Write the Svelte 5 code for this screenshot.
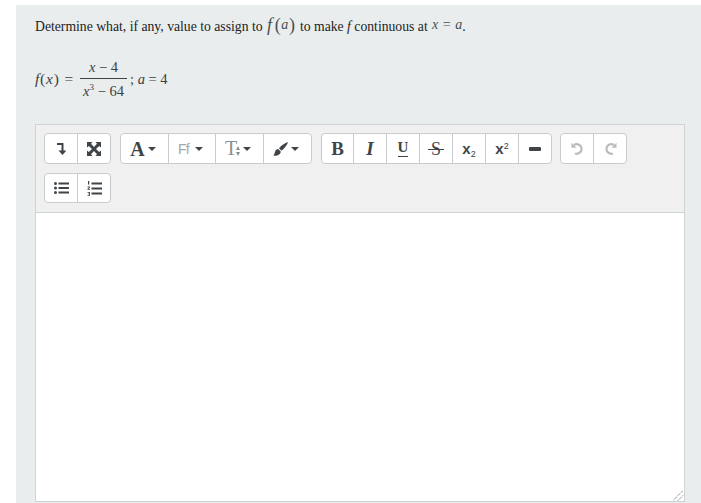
<script>
	const groups = [
		[{ id: 'indent', w: 33 }, { id: 'full', w: 32 }],
		[{ id: 'font', w: 48 }, { id: 'family', w: 47 }, { id: 'size', w: 48 }, { id: 'brush', w: 47 }],
		[
			{ id: 'bold', w: 32 },
			{ id: 'italic', w: 33 },
			{ id: 'underline', w: 33 },
			{ id: 'strike', w: 33 },
			{ id: 'sub', w: 33 },
			{ id: 'sup', w: 33 },
			{ id: 'rule', w: 32 }
		],
		[{ id: 'undo', w: 33 }, { id: 'redo', w: 32 }]
	];
	const lists = [{ id: 'bullets', w: 33 }, { id: 'numbers', w: 32 }];
	const withCaret = ['font', 'family', 'size', 'brush'];
</script>

{#snippet caret()}
	<svg class="caret" width="8" height="4" viewBox="0 0 8 4"><path d="M0 0h8L4 4z" fill="#3f4448" /></svg>
{/snippet}

{#snippet icon(id)}
	{#if id === 'indent'}
		<svg width="9" height="12" viewBox="0 0 9 12"><path d="M0 1h5.500v7" fill="none" stroke="#3f4448" stroke-width="2" /><path d="M1.500 7.500h8L5.500 12z" fill="#3f4448" /></svg>
	{:else if id === 'full'}
		<svg width="14" height="14" viewBox="0 0 14 14" fill="#3f4448">
			<path d="M0 0h5.500L4 1.800 7 5l3-3.200L8.500 0H14v5.500L12.200 4 9 7l3.200 3L14 8.500V14H8.500L10 12.200 7 9l-3 3.200L5.500 14H0V8.500L1.800 10 5 7 1.800 4 0 5.500z" />
		</svg>
	{:else if id === 'font'}
		<span class="serif big">A</span>{@render caret()}
	{:else if id === 'family'}
		<span class="ff">Ff</span>{@render caret()}
	{:else if id === 'size'}
		<span class="tsize">T</span>
		<svg class="updown" width="4" height="10" viewBox="0 0 4 10"><path d="M2 0l2 4H0zM2 10L0 6h4z" fill="#8b8f92" /></svg>
		{@render caret()}
	{:else if id === 'brush'}
		<svg width="15" height="14" viewBox="0 0 15 14" fill="#3f4448">
			<path d="M14.800.4c.6.600-3.200 6.200-6.300 8.300L6 6.300C8.400 3.300 14.200-.2 14.800.4z" />
			<path d="M5.200 7l2.500 2.500c.2 2.600-3 4.800-7.700 4.100 1.800-.9 1.300-2.500 2.300-4.500C2.900 7.700 4.200 7 5.200 7z" />
		</svg>
		{@render caret()}
	{:else if id === 'bold'}
		<span class="serif b">B</span>
	{:else if id === 'italic'}
		<span class="serif i">I</span>
	{:else if id === 'underline'}
		<span class="serif u">U</span>
	{:else if id === 'strike'}
		<span class="serif s">S</span>
	{:else if id === 'sub'}
		<span class="script">x<small class="low">2</small></span>
	{:else if id === 'sup'}
		<span class="script">x<small class="high">2</small></span>
	{:else if id === 'rule'}
		<span class="dash"></span>
	{:else if id === 'undo'}
		<svg width="13" height="13" viewBox="0 0 13 13" fill="none" stroke="#b9bcbe" stroke-width="2.200">
			<path d="M3 3A4.800 4.800 0 1 1 4 11.400" /><path d="M.5 .8v5h5z" fill="#b9bcbe" stroke="none" />
		</svg>
	{:else if id === 'redo'}
		<svg width="13" height="13" viewBox="0 0 13 13" fill="none" stroke="#b9bcbe" stroke-width="2.200">
			<path d="M10 3A4.800 4.800 0 1 0 9 11.400" /><path d="M12.500 .8v5h-5z" fill="#b9bcbe" stroke="none" />
		</svg>
	{:else if id === 'bullets'}
		<svg width="15" height="12" viewBox="0 0 15 12" fill="#3f4448">
			<circle cx="1.500" cy="1.500" r="1.500" /><circle cx="1.500" cy="6" r="1.500" /><circle cx="1.500" cy="10.500" r="1.500" />
			<path d="M4.500.5H15v2H4.500zM4.500 5H15v2H4.500zM4.500 9.500H15v2H4.500z" />
		</svg>
	{:else if id === 'numbers'}
		<svg width="15" height="15" viewBox="0 0 15 15" fill="#3f4448">
			<path d="M1 0h1.200v3.500H1zM.5 5.500h2.500v1L1.500 8H3v.8H.5v-1L2 6.300H.5zM.5 11h2.500v3.800H.5V14h1.600v-.7H1v-.6h1.100v-.9H.5z" />
			<path d="M4.500 1.500H15v2H4.500zM4.500 6.500H15v2H4.500zM4.500 11.500H15v2H4.500z" />
		</svg>
	{/if}
{/snippet}

<div class="panel">
	<p class="prompt">
		Determine what, if any, value to assign to
		<span class="math big-math"><i>f</i>&#8202;(<i class="small-a">a</i>)</span>
		to make <i>f</i> continuous at
		<span class="math small-math"><i>x</i> = <i>a</i></span>.
	</p>

	<div class="formula">
		<span class="lhs"><i>f</i>(<i>x</i>) =</span>
		<span class="fraction">
			<span class="top"><i>x</i> − 4</span>
			<span class="bottom"><i>x</i><sup>3</sup> − 64</span>
		</span>
		<span class="rest">; <i>a</i> = 4</span>
	</div>

	<div class="editor">
		<div class="toolbar">
			<div class="row">
				{#each groups as group}
					<div class="group">
						{#each group as btn}
							<button class:has-caret={withCaret.includes(btn.id)} style="width: {btn.w}px">{@render icon(btn.id)}</button>
						{/each}
					</div>
				{/each}
			</div>
			<div class="row second">
				<div class="group">
					{#each lists as btn}
						<button style="width: {btn.w}px">{@render icon(btn.id)}</button>
					{/each}
				</div>
			</div>
		</div>
		<div class="body">
			<svg class="grip" width="11" height="11" viewBox="0 0 11 11">
				<path d="M0 10.500L10 .5M5 10.500L10 5.500" stroke="#555" stroke-width="1" stroke-dasharray="1 1" fill="none" />
			</svg>
		</div>
	</div>
</div>

<style>
	:global(body) {
		background: #fff;
		overflow: hidden;
	}

	.panel {
		background: #e9edee;
		box-sizing: border-box;
		color: #222;
		font-family: "Liberation Serif", serif;
		font-size: 13.7px;
		height: 498px;
		margin: 5px 0 0 16px;
		padding: 0 16px 0 19px;
	}

	.prompt {
		line-height: 18px;
		margin: 0;
		padding-top: 11px;
		white-space: nowrap;
	}

	.math {
		color: #4a4f52;
	}

	.big-math {
		font-size: 18px;
		letter-spacing: 0.6px;
		margin: 0 1px;
	}

	.small-a {
		font-size: 14px;
		position: relative;
		top: -2px;
	}

	.small-math {
		font-size: 14px;
		margin-left: 1px;
		position: relative;
		top: -2px;
		word-spacing: 1px;
	}

	.formula {
		align-items: center;
		color: #3c4144;
		display: flex;
		font-size: 14.5px;
		height: 50px;
		margin-top: 18px;
	}

	.lhs {
		font-size: 15.5px;
		letter-spacing: 0.8px;
		white-space: nowrap;
		width: 45px;
	}

	.fraction {
		display: inline-flex;
		flex-direction: column;
		text-align: center;
		width: 47px;
	}

	.top {
		border-bottom: 1px solid #3c4144;
		line-height: 17px;
		padding-bottom: 2px;
	}

	.bottom {
		line-height: 17px;
		padding-top: 4px;
	}

	sup {
		font-size: 9px;
		line-height: 0;
	}

	.rest {
		margin-left: 3px;
		white-space: nowrap;
	}

	.editor {
		background: #fff;
		border: 1px solid #cfd3d6;
		box-sizing: border-box;
		display: flex;
		flex-direction: column;
		height: 378px;
		margin-top: 20px;
	}

	.toolbar {
		background: #f0f0f0;
		border-bottom: 1px solid #cfd3d6;
		box-sizing: border-box;
		display: flex;
		flex-direction: column;
		gap: 9px;
		height: 88px;
		padding: 8px 8px 0;
	}

	.row {
		display: flex;
		gap: 9px;
	}

	.group {
		background: #fff;
		border: 1px solid #c9cccf;
		border-radius: 4px;
		box-sizing: border-box;
		display: flex;
		height: 31px;
	}

	.row > .group:nth-child(4) {
		margin-left: -1px;
	}

	.second > .group {
		height: 30px;
	}

	button {
		align-items: center;
		background: none;
		border: none;
		border-right: 1px solid #c9cccf;
		box-sizing: border-box;
		color: #3f4448;
		display: flex;
		gap: 3px;
		justify-content: center;
		padding: 0;
	}

	button:last-child {
		border-right: none;
	}

	button.has-caret {
		padding-right: 3px;
	}

	.serif {
		font-family: "Liberation Serif", serif;
		line-height: 1;
	}

	.big {
		font-size: 20px;
		font-weight: bold;
	}

	.ff {
		color: #a4a7a9;
		font-family: "Liberation Sans", sans-serif;
		font-size: 14px;
		letter-spacing: -0.7px;
		margin-right: 3px;
	}

	.tsize {
		color: #8b8f92;
		font-family: "Liberation Serif", serif;
		font-size: 20px;
		margin-right: -4px;
	}

	.updown {
		margin-top: 5px;
	}

	.b {
		font-size: 19px;
		font-weight: bold;
	}

	.i {
		font-size: 19px;
		font-style: italic;
		font-weight: bold;
	}

	.u {
		border-bottom: 1px solid #3f4448;
		font-size: 15px;
		font-weight: bold;
		padding: 0 0 1px;
	}

	.s {
		font-size: 18px;
		position: relative;
	}

	.s::after {
		background: #3f4448;
		content: "";
		height: 1px;
		left: -3px;
		position: absolute;
		right: -3px;
		top: 9px;
	}

	.script {
		font-family: "Liberation Sans", sans-serif;
		font-size: 15px;
		font-weight: bold;
		line-height: 1;
	}

	.script small {
		font-size: 9px;
		font-weight: normal;
		position: relative;
	}

	.low {
		top: 3px;
	}

	.high {
		top: -5px;
	}

	.dash {
		background: #3f4448;
		border-radius: 1px;
		height: 4px;
		width: 12px;
	}

	.body {
		flex: 1;
		position: relative;
	}

	.grip {
		bottom: 0;
		position: absolute;
		right: 0;
	}
</style>
